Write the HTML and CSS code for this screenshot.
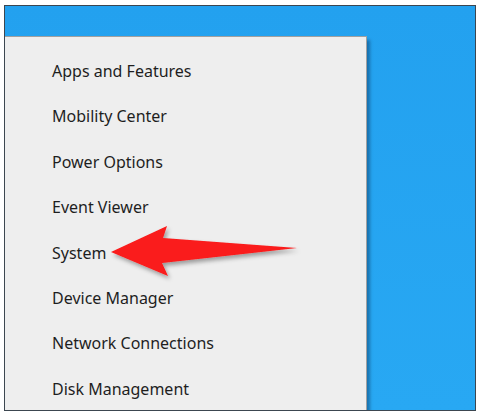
FILE: index.html
```html
<!DOCTYPE html>
<html>
<head>
<meta charset="utf-8">
<link rel="stylesheet" href="styles.css">
</head>
<body>
<div class="frame">
  <div class="menu">
    <ul class="items">
      <li>Apps and Features</li>
      <li>Mobility Center</li>
      <li>Power Options</li>
      <li>Event Viewer</li>
      <li>System</li>
      <li>Device Manager</li>
      <li>Network Connections</li>
      <li>Disk Management</li>
    </ul>
  </div>
  <svg class="arrow" width="482" height="420" viewBox="0 0 482 420">
    <defs>
      <filter id="sh" x="-20%" y="-50%" width="140%" height="200%">
        <feDropShadow dx="2" dy="3" stdDeviation="2" flood-color="#000" flood-opacity="0.35"/>
      </filter>
    </defs>
    <polygon points="111,252 167,226 163,238 297,248 162,263 168,276" fill="#fa1a1a" filter="url(#sh)"/>
  </svg>
</div>
</body>
</html>
```
FILE: styles.css
```css
html, body {
  margin: 0;
  padding: 0;
  background: #ffffff;
}
body {
  width: 482px;
  height: 420px;
  position: relative;
  overflow: hidden;
}
.frame {
  margin: 5px 0 0 4px;
  width: 470px;
  height: 404px;
  border: 1px solid #3c4650;
  background: linear-gradient(180deg, #23a1ef 0%, #28a8f3 100%);
  padding-top: 30px;
  box-sizing: content-box;
  overflow: hidden;
  height: 374px;
}
.menu {
  width: 361px;
  height: 373px;
  background: #eeeeee;
  border-top: 1px solid #a0a0a0;
  border-right: 1px solid #a0a0a0;
  border-bottom: 1px solid #a0a0a0;
  box-shadow: 3px 4px 3px rgba(0, 20, 50, 0.35);
  overflow: hidden;
}
.items {
  list-style: none;
  margin: 0;
  padding: 12px 0 0 47px;
}
.items li {
  height: 45.4px;
  line-height: 45.4px;
  font-family: "Noto Sans", "Open Sans", sans-serif;
  font-size: 16px;
  color: #1e1e1e;
  white-space: nowrap;
}
.arrow {
  position: absolute;
  left: 0;
  top: 0;
  pointer-events: none;
}
```
